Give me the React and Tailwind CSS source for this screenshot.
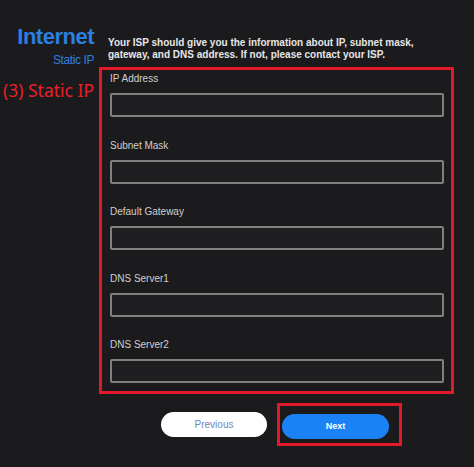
import React from "react";

const fields = ["IP Address", "Subnet Mask", "Default Gateway", "DNS Server1", "DNS Server2"];

function Field({ label }) {
    return (
        <div className="flex flex-col">
            <span className="text-[10px] leading-[14px] text-[#cfcfcf]">{label}</span>
            <div className="mt-[7px] h-[24px] w-[334px] rounded-[2px] border-2 border-[#808080] bg-[#1f1f21]" />
        </div>
    );
}

export default function App() {
    return (
        <div
            className="flex h-[467px] w-[474px] bg-[#1b1b1d] pt-[25px]"
            style={{ fontFamily: '"Liberation Sans", Arial, sans-serif' }}
        >
            <div className="flex w-[94px] shrink-0 flex-col items-end">
                <span className="text-[22px] font-bold leading-[24px] tracking-[-0.5px] text-[#2b7fe0]">Internet</span>
                <span className="mt-[4px] text-[12px] leading-[14px] tracking-[-0.4px] text-[#2b7fe0]">Static IP</span>
                <span
                    className="mt-[12px] text-[17.5px] leading-[22px] text-[#e8202a]"
                    style={{ fontFamily: '"Noto Sans", sans-serif' }}
                >
                    (3) Static IP
                </span>
            </div>
            <div className="ml-[5px] flex flex-col">
                <p className="mt-[12px] pl-[9px] text-[10px] font-bold leading-[12px] text-[#e6e6e6]">
                    Your ISP should give you the information about IP, subnet mask,
                    <br />
                    gateway, and DNS address. If not, please contact your ISP.
                </p>
                <div className="mt-[6px] flex w-[355px] flex-col gap-[21.5px] border-[3px] border-[#e3182a] pb-[8px] pl-[8px] pt-[2px]">
                    {fields.map((f) => (
                        <Field key={f} label={f} />
                    ))}
                </div>
                <div className="mt-[9px] flex items-start pl-[62px]">
                    <button className="mt-[9px] h-[25px] w-[106px] rounded-full bg-white text-[10px] text-[#6b87b8]">
                        Previous
                    </button>
                    <div className="ml-[10px] border-[3px] border-[#e3182a] pb-[4px] pl-[2px] pr-[10px] pt-[6px]">
                        <button className="h-[25px] w-[107px] rounded-full bg-[#1a82f5] text-[9px] font-bold text-white">
                            Next
                        </button>
                    </div>
                </div>
            </div>
        </div>
    );
}
